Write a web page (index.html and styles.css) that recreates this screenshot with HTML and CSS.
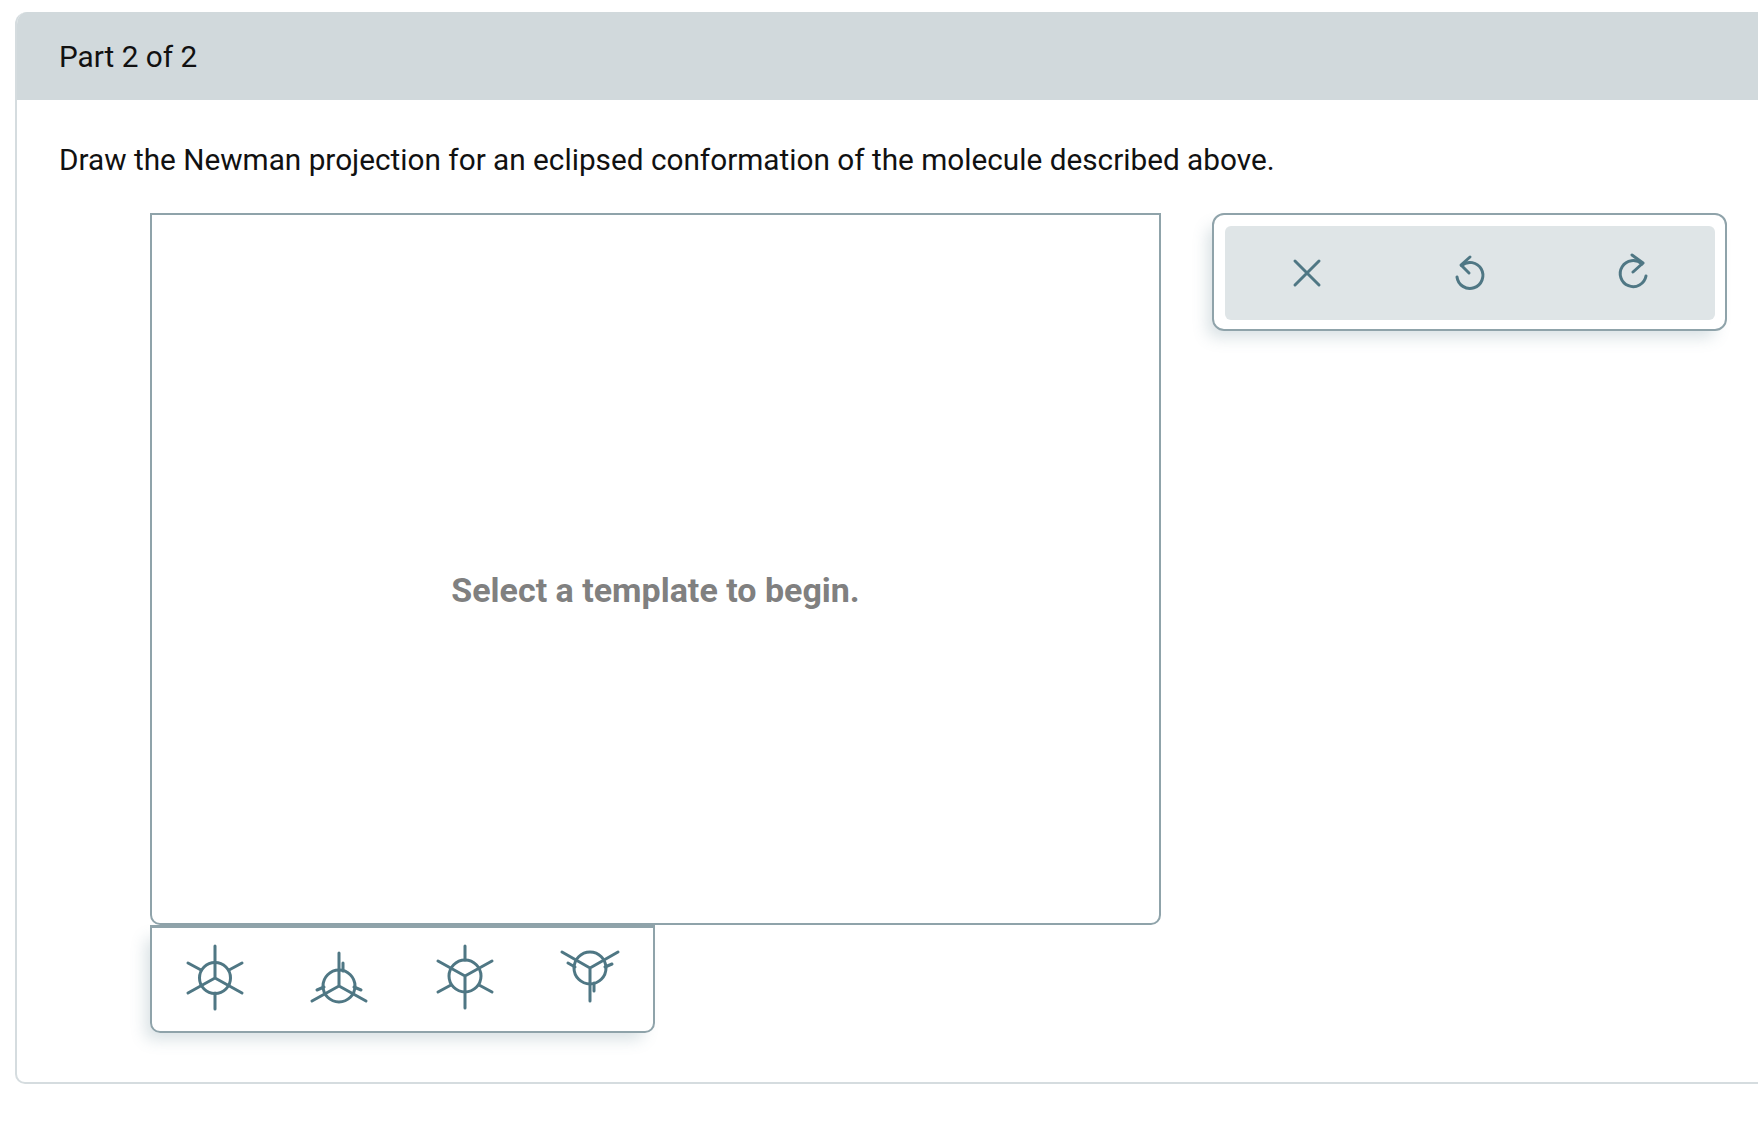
FILE: index.html
```html
<!DOCTYPE html>
<html lang="en">
<head>
  <meta charset="UTF-8">
  <title>Part 2 of 2</title>
  <link rel="stylesheet" href="styles.css">
</head>
<body>
  <section class="card">
    <header class="card-head">Part 2 of 2</header>

    <div class="card-body">
      <p class="question">Draw the Newman projection for an eclipsed conformation of the molecule described above.</p>

      <div class="workspace">
        <div class="drawing">
          <div class="canvas">Select a template to begin.</div>

          <!-- templates -->
          <div class="tray">
            <svg class="template" viewBox="0 0 80 80">
              <g transform="translate(40 38)">
                <circle r="15.5"/>
                <path d="M0 0V-32M0 0L-27 15M0 0L27 15"/>
                <path d="M0 15V31M-27 -15L-14 -8M27 -15L14 -8"/>
              </g>
            </svg>
            <svg class="template" viewBox="0 0 80 80">
              <g transform="translate(39 46)">
                <circle r="16"/>
                <path d="M0 0V-33M0 0L-27 15M0 0L27 15"/>
                <path d="M4 -23V-15M-22 4L-15 1M22 4L15 1"/>
              </g>
            </svg>
            <svg class="template" viewBox="0 0 80 80">
              <g transform="translate(40 36)">
                <circle r="16"/>
                <path d="M0 0V32M0 0L-27 -15M0 0L27 -15"/>
                <path d="M0 -16V-30M-27 16L-14 9M27 16L14 9"/>
              </g>
            </svg>
            <svg class="template" viewBox="0 0 80 80">
              <g transform="translate(40 28)">
                <circle r="16"/>
                <path d="M0 0V33M0 0L-28 -16M0 0L28 -16"/>
                <path d="M4 15V23M-22 -5L-15 -1M22 -4L15 -1"/>
              </g>
            </svg>
          </div>
        </div>

        <!-- clear / undo / redo -->
        <div class="toolbox">
          <div class="tools">
            <button class="tool">
              <svg viewBox="0 0 40 40"><path d="M8 8L32 32M32 8L8 32"/></svg>
            </button>
            <button class="tool">
              <svg viewBox="0 0 40 40">
                <g transform="translate(20 24)">
                  <path d="M-8.5 -11.5A13 13 0 1 1 -13 0"/>
                  <path d="M0 -20L-9 -12L-1 -4"/>
                </g>
              </svg>
            </button>
            <button class="tool">
              <svg viewBox="0 0 40 40">
                <g transform="translate(20 23)">
                  <path d="M9 -12A13 13 0 1 0 13 0"/>
                  <path d="M-1 -21L10 -13L0 -4"/>
                </g>
              </svg>
            </button>
          </div>
        </div>
      </div>
    </div>
  </section>
</body>
</html>
```

FILE: styles.css
```css
body {
  margin: 0;
  padding: 12px 0 0 15px;
  background: #fff;
  font-family: Roboto, sans-serif;
  overflow: hidden;
}

/* ===== Card ===== */
.card {
  width: 1800px;
  height: 1072px;
  box-sizing: border-box;
  border: 2px solid #d5dcdf;
  border-top: 0;
  border-radius: 12px 0 0 10px;
  overflow: hidden;
}

.card-head {
  height: 88px;
  margin-left: -2px;
  padding-left: 44px;
  background: #d1d9dc;
  color: #111;
  font-size: 29.75px;
  line-height: 90px;
}

.card-body {
  padding: 42px 0 0 42px;
}

.question {
  margin: 0;
  color: #111;
  font-size: 29.75px;
  line-height: 36px;
}

/* ===== Workspace ===== */
.workspace {
  display: flex;
  align-items: flex-start;
  gap: 51px;
  margin: 35px 0 0 91px;
}

.canvas {
  width: 1011px;
  height: 712px;
  box-sizing: border-box;
  padding-top: 42px;
  display: flex;
  align-items: center;
  justify-content: center;
  border: 2px solid #8fa3aa;
  border-radius: 0 0 10px 10px;
  color: #808080;
  font-size: 34px;
  font-weight: 700;
}

.tray {
  width: 505px;
  height: 108px;
  box-sizing: border-box;
  padding: 12px 0 0 23px;
  display: flex;
  gap: 45px;
  border: 2px solid #8fa3aa;
  border-top-width: 3px;
  border-radius: 0 0 10px 10px;
  box-shadow: -8px 10px 16px -4px rgba(74, 114, 128, 0.22);
}

.template {
  width: 80px;
  height: 80px;
  fill: none;
  stroke: #4f7784;
  stroke-width: 3;
  stroke-linecap: round;
}

/* ===== Toolbox ===== */
.toolbox {
  width: 515px;
  height: 118px;
  box-sizing: border-box;
  padding: 11px 10px 9px 11px;
  border: 2px solid #8fa3aa;
  border-radius: 12px;
  box-shadow: -8px 10px 16px -4px rgba(74, 114, 128, 0.22);
}

.tools {
  height: 100%;
  display: grid;
  grid-template-columns: repeat(3, 1fr);
  background: #dfe5e7;
  border-radius: 6px;
}

.tool {
  padding: 0;
  display: flex;
  align-items: center;
  justify-content: center;
  background: none;
  border: 0;
}

.tool svg {
  width: 40px;
  height: 40px;
  fill: none;
  stroke: #4f7784;
  stroke-width: 3;
  stroke-linecap: round;
  stroke-linejoin: round;
}
```
